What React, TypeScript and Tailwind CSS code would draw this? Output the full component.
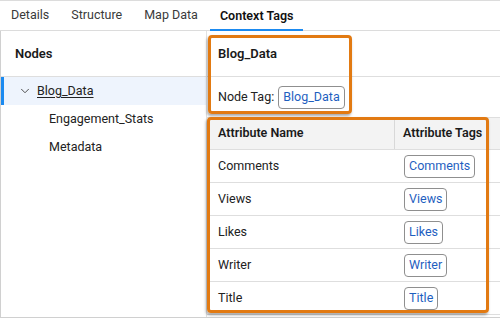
import { ChevronDown } from 'lucide-react';

const tabs = ['Details', 'Structure', 'Map Data', 'Context Tags'];
const attributes = ['Comments', 'Views', 'Likes', 'Writer', 'Title'];

function Tag({ label }: { label: string }) {
  return (
    <span className="inline-flex h-[23px] items-center rounded-[4px] border border-[#8f8f8f] px-[4px] text-[12.5px] text-[#1f5fbf]">
      {label}
    </span>
  );
}

export default function App() {
  return (
    <div className="relative h-[318px] w-[500px] overflow-hidden bg-white font-['Roboto',sans-serif] text-[12.5px] text-[#1a1a1a]">
      {/* Tab bar */}
      <div className="flex h-[31px] gap-[2px] border-t border-b border-[#dcdcdc] pl-[1px]">
        {tabs.map((t, i) => (
          <div
            key={t}
            className={
              i === 3
                ? '-mb-px flex items-center border-b-2 border-[#1b8af0] px-[10px] pt-[2px] font-semibold text-[#111]'
                : 'flex items-center px-[10px] text-[#3a3a3a]'
            }
          >
            {t}
          </div>
        ))}
      </div>

      <div className="flex h-[287px] border-l border-b border-[#d0d0d0]">
        {/* Nodes panel */}
        <div className="w-[206px] shrink-0 border-r border-[#e2e2e2]">
          <div className="flex h-[46px] items-center border-b border-[#dedede] pl-[14px] text-[13px] font-semibold">Nodes</div>
          <div className="flex h-[28px] items-center border-l-[3px] border-[#1b8af0] bg-[#eef4fd] pl-[14px]">
            <ChevronDown size={14} strokeWidth={1.6} className="text-[#444]" />
            <span className="ml-[5px] text-[#222] underline underline-offset-2">Blog_Data</span>
          </div>
          <div className="flex h-[28px] items-center pl-[48px] text-[#222]">Engagement_Stats</div>
          <div className="flex h-[28px] items-center pl-[48px] text-[#222]">Metadata</div>
        </div>

        {/* Detail panel */}
        <div className="flex-1">
          <div className="flex h-[46px] items-center border-b border-[#dedede] pl-[11px] text-[13px] font-semibold">Blog_Data</div>
          <div className="flex h-[40px] items-center gap-[4px] pl-[11px] text-[#222]">
            Node Tag: <Tag label="Blog_Data" />
          </div>
          <div className="border-t border-[#dedede]">
            <div className="flex h-[32px] border-b border-[#dedede] bg-[#f3f3f3] font-semibold">
              <div className="flex w-[188px] items-center border-r border-[#d8d8d8] pl-[11px]">Attribute Name</div>
              <div className="flex flex-1 items-center pl-[8px]">Attribute Tags</div>
            </div>
            {attributes.map((a) => (
              <div key={a} className="flex h-[33px] border-b border-[#dedede]">
                <div className="flex w-[188px] items-center pl-[11px] text-[#222]">{a}</div>
                <div className="flex flex-1 items-center pl-[9px]">
                  <Tag label={a} />
                </div>
              </div>
            ))}
          </div>
        </div>
      </div>

      {/* Annotation highlights */}
      <div className="pointer-events-none absolute left-[208px] top-[35px] h-[79px] w-[144px] rounded-[4px] border-[3px] border-[#e27a12] shadow-[-1px_2px_3px_rgba(0,0,0,0.35)]" />
      <div className="pointer-events-none absolute left-[207px] top-[117px] h-[196px] w-[282px] rounded-[4px] border-[3px] border-[#e27a12] shadow-[-1px_2px_3px_rgba(0,0,0,0.35)]" />
    </div>
  );
}
